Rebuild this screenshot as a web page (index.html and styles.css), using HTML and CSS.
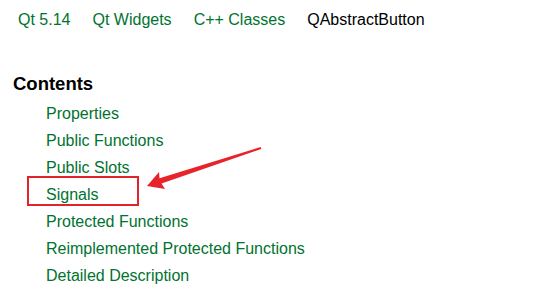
FILE: index.html
```html
<!DOCTYPE html>
<html lang="en">
<head>
    <meta charset="UTF-8">
    <meta name="viewport" content="width=device-width, initial-scale=1.0">
    <title>QAbstractButton | Qt Widgets 5.14</title>
    <link rel="stylesheet" href="styles.css">
</head>
<body>
    <ul class="breadcrumb">
        <li><a href="#">Qt 5.14</a></li>
        <li><a href="#">Qt Widgets</a></li>
        <li><a href="#">C++ Classes</a></li>
        <li>QAbstractButton</li>
    </ul>

    <div class="toc">
        <h3>Contents</h3>
        <ul>
            <li><a href="#">Properties</a></li>
            <li><a href="#">Public Functions</a></li>
            <li><a href="#">Public Slots</a></li>
            <li><a href="#">Signals</a></li>
            <li><a href="#">Protected Functions</a></li>
            <li><a href="#">Reimplemented Protected Functions</a></li>
            <li><a href="#">Detailed Description</a></li>
        </ul>
    </div>

    <!-- screenshot annotation -->
    <svg class="markup" width="534" height="300" viewBox="0 0 534 300">
        <rect x="28" y="177" width="110" height="28" fill="none" stroke="#e3232b" stroke-width="2"/>
        <polygon fill="#e8242b" points="260.7,147 159.5,178.2 159,172 147,186 165,189 161.5,183.4 261.3,149"/>
    </svg>
</body>
</html>
```

FILE: styles.css
```css
body {
    margin: 0;
    font-family: "Liberation Sans", Arial, sans-serif;
    font-size: 16px;
    color: #000;
    background: #fff;
    position: relative;
    height: 300px;
    overflow: hidden;
}

a {
    color: #00732f;
    text-decoration: none;
}

.breadcrumb {
    display: flex;
    gap: 22px;
    list-style: none;
    margin: 0;
    padding: 11px 0 0 18px;
}

.toc {
    padding: 44px 0 0 13px;
}

.toc h3 {
    font-size: 18.5px;
    font-weight: bold;
    margin: 0 0 5px;
}

.toc ul {
    list-style: none;
    margin: 0;
    padding: 0 0 0 33px;
}

.toc li {
    line-height: 27px;
}

.markup {
    position: absolute;
    left: 0;
    top: 0;
}
```
